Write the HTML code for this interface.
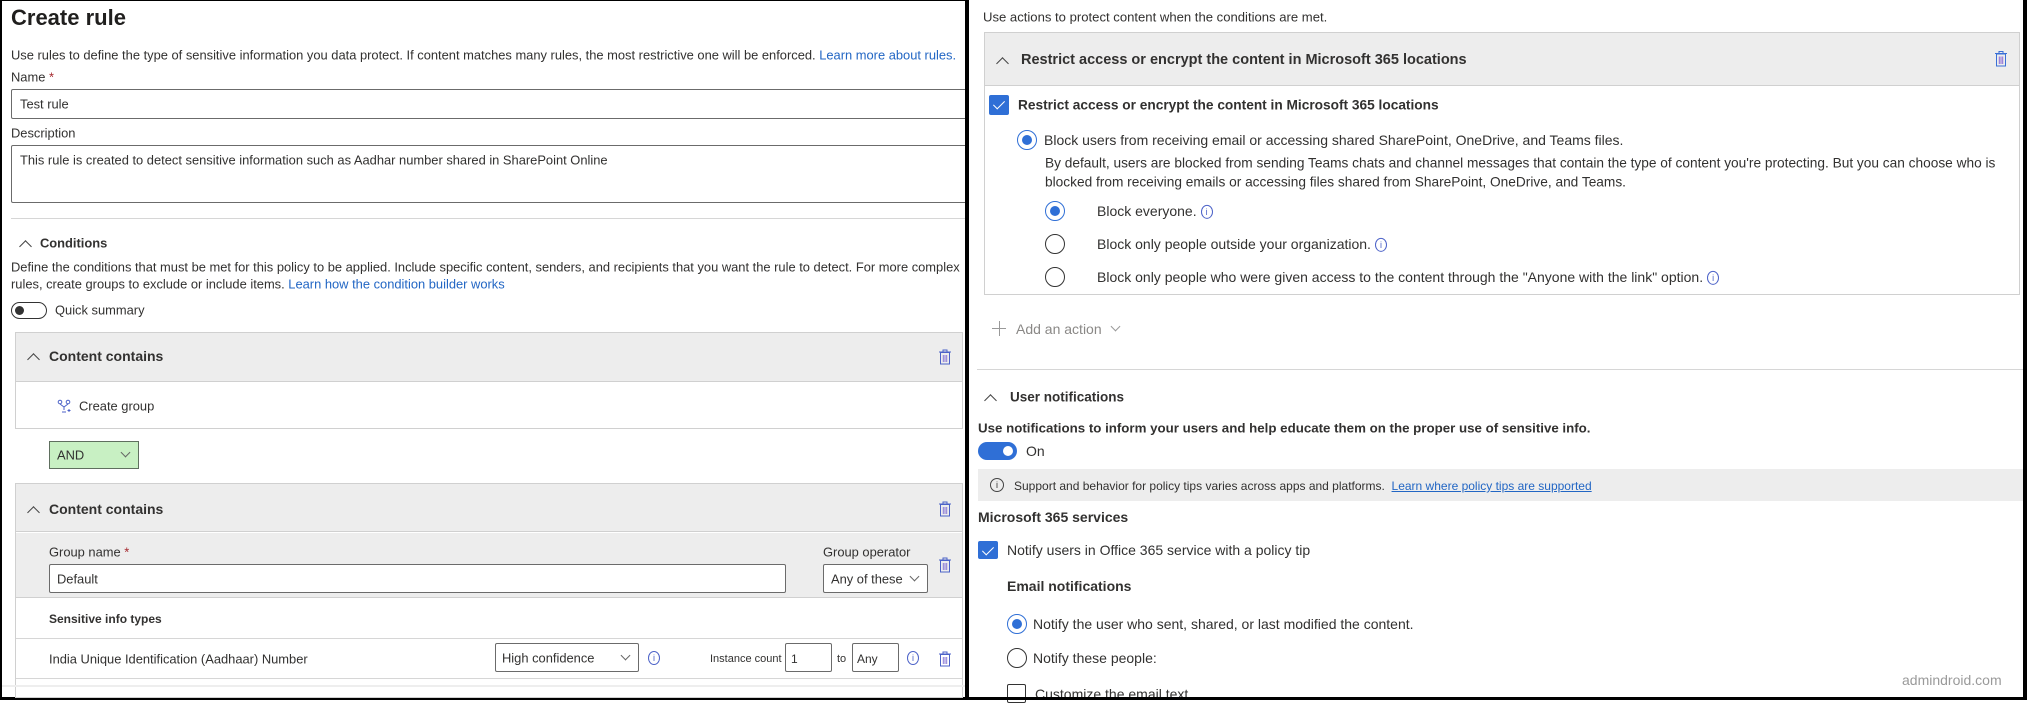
<!DOCTYPE html>
<html><head><meta charset="utf-8"><style>
*{box-sizing:border-box;margin:0;padding:0}
body{width:2027px;height:700px;overflow:hidden;background:#fff;font-family:"Liberation Sans",sans-serif;font-size:13px;color:#323130;position:relative}
.a{position:absolute;white-space:nowrap}
.c{transform:translateY(-50%)}
.link{color:#2266c4}
.b{font-weight:bold}
.box{position:absolute;border:1px solid #d0d0d0}
.gray{background:#ededed}
.inp{position:absolute;border:1px solid #6b6b6b;background:#fff;border-radius:2px}
.chev{position:absolute;width:9px;height:9px;border-left:1.2px solid #444;border-top:1.2px solid #444;transform:rotate(45deg)}
.dd{position:absolute;width:7px;height:7px;border-right:1px solid #666;border-bottom:1px solid #666;transform:rotate(45deg)}
.radio{position:absolute;width:20px;height:20px;border:1.5px solid #333;border-radius:50%;background:#fff}
.radio.on{border-color:#2f6fd6}
.radio.on::after{content:"";position:absolute;left:3.5px;top:3.5px;width:10px;height:10px;border-radius:50%;background:#2f6fd6}
.cb{position:absolute;background:#2f6fd6;border-radius:2px}
.cb::after{content:"";position:absolute;left:7px;top:3px;width:5px;height:10px;border-right:1.5px solid #fff;border-bottom:1.5px solid #fff;transform:rotate(45deg)}
.info{position:absolute;width:12px;height:14px;border:1px solid #4c62c8;border-radius:50%;font-size:9px;color:#4c62c8;text-align:center;line-height:12px}
.ii{display:inline-block;width:12px;height:14px;border:1px solid #4c62c8;border-radius:50%;font-size:9px;color:#4c62c8;text-align:center;line-height:12px;vertical-align:middle;margin-left:4px}
.L{font-size:12.9px}
.R{font-size:14px}
</style></head><body>
<!-- borders -->
<div class="a" style="left:0;top:0;width:2027px;height:1px;background:#000"></div>
<div class="a" style="left:0;top:0;width:2px;height:700px;background:#000"></div>
<div class="a" style="left:0;top:697px;width:2027px;height:3px;background:#000"></div>
<div class="a" style="left:2023px;top:0;width:4px;height:700px;background:#000"></div>

<!-- LEFT -->
<div class="a c b" style="left:11px;top:18px;font-size:22px;color:#201f1e">Create rule</div>
<div class="a c L" style="left:11px;top:55px">Use rules to define the type of sensitive information you data protect. If content matches many rules, the most restrictive one will be enforced. <span class="link">Learn more about rules.</span></div>
<div class="a c L" style="left:11px;top:77px">Name <span style="color:#a4262c">*</span></div>
<div class="inp" style="left:11px;top:89px;width:958px;height:30px"></div>
<div class="a c L" style="left:20px;top:104px">Test rule</div>
<div class="a c L" style="left:11px;top:133px">Description</div>
<div class="inp" style="left:11px;top:145px;width:958px;height:58px"></div>
<div class="a c L" style="left:20px;top:160px">This rule is created to detect sensitive information such as Aadhar number shared in SharePoint Online</div>
<div class="a" style="left:11px;top:218px;width:955px;height:1px;background:#d6d6d6"></div>
<div class="chev" style="left:21px;top:242px"></div>
<div class="a c b L" style="left:40px;top:243px">Conditions</div>
<div class="a c L" style="left:11px;top:267px">Define the conditions that must be met for this policy to be applied. Include specific content, senders, and recipients that you want the rule to detect. For more complex</div>
<div class="a c L" style="left:11px;top:284px">rules, create groups to exclude or include items. <span class="link">Learn how the condition builder works</span></div>
<div class="a" style="left:11px;top:302px;width:36px;height:17px;border:1.5px solid #333;border-radius:9px"></div>
<div class="a" style="left:15px;top:306px;width:9px;height:9px;border-radius:50%;background:#333"></div>
<div class="a c L" style="left:55px;top:310px">Quick summary</div>

<div class="box" style="left:15px;top:332px;width:948px;height:97px"></div>
<div class="a gray" style="left:16px;top:333px;width:946px;height:49px;border-bottom:1px solid #d0d0d0"></div>
<div class="chev" style="left:29px;top:355px"></div>
<div class="a c b" style="left:49px;top:356px;font-size:14px">Content contains</div>
<svg class="a" style="left:938px;top:349px" width="14" height="16" viewBox="0 0 14 16"><path d="M1 3h12M5 3V1h4v2M2.5 3.5h9v11.5h-9z" fill="none" stroke="#4c62c8"/><path d="M5.3 6v7M7 6v7M8.7 6v7" stroke="#8a7ad6"/></svg>
<svg class="a" style="left:57px;top:399px" width="15" height="14" viewBox="0 0 15 14"><g fill="none" stroke="#4c62c8" stroke-width="1"><circle cx="3" cy="3" r="1.8"/><circle cx="11" cy="3" r="1.8"/><path d="M3 5l4 3 4-3M7 8v3M5 13h4M12 10v3M10.5 11.5h3"/></g></svg>
<div class="a c L" style="left:79px;top:406px">Create group</div>
<div class="a" style="left:49px;top:441px;width:90px;height:28px;background:#c8f0c3;border:1px solid #5f6f5f"></div>
<div class="a c L" style="left:57px;top:455px">AND</div>
<div class="dd" style="left:122px;top:449px"></div>

<div class="box" style="left:15px;top:483px;width:948px;height:215px"></div>
<div class="a gray" style="left:16px;top:484px;width:946px;height:48px;border-bottom:1px solid #d0d0d0"></div>
<div class="chev" style="left:29px;top:508px"></div>
<div class="a c b" style="left:49px;top:509px;font-size:14px">Content contains</div>
<svg class="a" style="left:938px;top:501px" width="14" height="16" viewBox="0 0 14 16"><path d="M1 3h12M5 3V1h4v2M2.5 3.5h9v11.5h-9z" fill="none" stroke="#4c62c8"/><path d="M5.3 6v7M7 6v7M8.7 6v7" stroke="#8a7ad6"/></svg>
<div class="a gray" style="left:16px;top:533px;width:946px;height:65px;border-bottom:1px solid #d0d0d0"></div>
<div class="a c L" style="left:49px;top:552px">Group name <span style="color:#a4262c">*</span></div>
<div class="inp" style="left:49px;top:564px;width:737px;height:29px"></div>
<div class="a c L" style="left:57px;top:579px">Default</div>
<div class="a c L" style="left:823px;top:552px">Group operator</div>
<div class="inp" style="left:823px;top:564px;width:105px;height:29px"></div>
<div class="a c L" style="left:831px;top:579px">Any of these</div>
<div class="dd" style="left:911px;top:573px"></div>
<svg class="a" style="left:938px;top:557px" width="14" height="16" viewBox="0 0 14 16"><path d="M1 3h12M5 3V1h4v2M2.5 3.5h9v11.5h-9z" fill="none" stroke="#4c62c8"/><path d="M5.3 6v7M7 6v7M8.7 6v7" stroke="#8a7ad6"/></svg>
<div class="a c b" style="left:49px;top:619px;font-size:12px">Sensitive info types</div>
<div class="a" style="left:16px;top:638px;width:946px;height:1px;background:#d6d6d6"></div>
<div class="a c L" style="left:49px;top:659px">India Unique Identification (Aadhaar) Number</div>
<div class="inp" style="left:495px;top:643px;width:144px;height:29px"></div>
<div class="a c L" style="left:502px;top:658px">High confidence</div>
<div class="dd" style="left:622px;top:652px"></div>
<div class="info" style="left:648px;top:651px">i</div>
<div class="a c" style="left:710px;top:659px;font-size:11px">Instance count</div>
<div class="inp" style="left:785px;top:643px;width:47px;height:29px"></div>
<div class="a c" style="left:791px;top:659px;font-size:12px">1</div>
<div class="a c" style="left:837px;top:659px;font-size:11px">to</div>
<div class="inp" style="left:852px;top:643px;width:47px;height:29px"></div>
<div class="a c" style="left:857px;top:659px;font-size:12px">Any</div>
<div class="info" style="left:907px;top:651px">i</div>
<svg class="a" style="left:938px;top:651px" width="14" height="16" viewBox="0 0 14 16"><path d="M1 3h12M5 3V1h4v2M2.5 3.5h9v11.5h-9z" fill="none" stroke="#4c62c8"/><path d="M5.3 6v7M7 6v7M8.7 6v7" stroke="#8a7ad6"/></svg>
<div class="a" style="left:16px;top:678px;width:946px;height:1px;background:#d6d6d6"></div>
<div class="a" style="left:2px;top:685px;width:963px;height:2px;background:#eeeeee"></div>

<!-- divider (covers overflow) -->
<div class="a" style="left:965px;top:0;width:1062px;height:697px;background:#fff"></div>
<div class="a" style="left:965px;top:0;width:4px;height:700px;background:#000"></div>
<div class="a" style="left:2023px;top:0;width:4px;height:700px;background:#000"></div>

<!-- RIGHT -->
<div class="a c" style="left:983px;top:17px;font-size:13.1px">Use actions to protect content when the conditions are met.</div>
<div class="box" style="left:984px;top:32px;width:1036px;height:263px"></div>
<div class="a gray" style="left:985px;top:33px;width:1034px;height:53px;border-bottom:1px solid #d0d0d0"></div>
<div class="chev" style="left:998px;top:59px"></div>
<div class="a c b" style="left:1021px;top:60px;font-size:14.5px">Restrict access or encrypt the content in Microsoft 365 locations</div>
<svg class="a" style="left:1994px;top:50px" width="14" height="17" viewBox="0 0 14 17"><path d="M1 3.5h12M5 3.5V1.5h4v2M2.5 4h9v12h-9z" fill="none" stroke="#3a6fd6"/><path d="M5.3 6.5v7.5M7 6.5v7.5M8.7 6.5v7.5" stroke="#8a6ad6"/></svg>
<div class="cb" style="left:989px;top:95px;width:20px;height:20px"></div>
<div class="a c b" style="left:1018px;top:105px;font-size:13.7px">Restrict access or encrypt the content in Microsoft 365 locations</div>
<div class="radio on" style="left:1017px;top:130px"></div>
<div class="a c R" style="left:1044px;top:140px">Block users from receiving email or accessing shared SharePoint, OneDrive, and Teams files.</div>
<div class="a c" style="left:1045px;top:163px;font-size:13.7px">By default, users are blocked from sending Teams chats and channel messages that contain the type of content you're protecting. But you can choose who is</div>
<div class="a c" style="left:1045px;top:182px;font-size:13.7px">blocked from receiving emails or accessing files shared from SharePoint, OneDrive, and Teams.</div>
<div class="radio on" style="left:1045px;top:201px"></div>
<div class="a c R" style="left:1097px;top:211px">Block everyone.<span class="ii">i</span></div>
<div class="radio" style="left:1045px;top:234px"></div>
<div class="a c R" style="left:1097px;top:244px">Block only people outside your organization.<span class="ii">i</span></div>
<div class="radio" style="left:1045px;top:267px"></div>
<div class="a c R" style="left:1097px;top:277px">Block only people who were given access to the content through the "Anyone with the link" option.<span class="ii">i</span></div>
<div class="a" style="left:992px;top:328px;width:14px;height:1px;background:#999"></div>
<div class="a" style="left:999px;top:321px;width:1px;height:15px;background:#999"></div>
<div class="a c R" style="left:1016px;top:329px;color:#8a8886">Add an action</div>
<div class="dd" style="left:1112px;top:323px;border-color:#999"></div>
<div class="a" style="left:977px;top:369px;width:1046px;height:1px;background:#d6d6d6"></div>
<div class="chev" style="left:986px;top:396px"></div>
<div class="a c b" style="left:1010px;top:397px;font-size:13.5px">User notifications</div>
<div class="a c" style="left:978px;top:428px;font-size:13.3px;font-weight:600">Use notifications to inform your users and help educate them on the proper use of sensitive info.</div>
<div class="a" style="left:978px;top:442px;width:39px;height:18px;border-radius:9px;background:#2f6fd6"></div>
<div class="a" style="left:1003px;top:446px;width:10px;height:10px;border-radius:50%;background:#fff"></div>
<div class="a c R" style="left:1026px;top:451px">On</div>
<div class="a" style="left:978px;top:469px;width:1045px;height:32px;background:#ededed"></div>
<div class="a" style="left:990px;top:478px;width:14px;height:14px;border:1px solid #444;border-radius:50%;font-size:9px;text-align:center;line-height:12px">i</div>
<div class="a c" style="left:1014px;top:486px;font-size:12px">Support and behavior for policy tips varies across apps and platforms. &nbsp;<span class="link" style="text-decoration:underline">Learn where policy tips are supported</span></div>
<div class="a c" style="left:978px;top:517px;font-size:14px;font-weight:600">Microsoft 365 services</div>
<div class="cb" style="left:978px;top:541px;width:20px;height:18px"></div>
<div class="a c R" style="left:1007px;top:550px">Notify users in Office 365 service with a policy tip</div>
<div class="a c" style="left:1007px;top:586px;font-size:14px;font-weight:600">Email notifications</div>
<div class="radio on" style="left:1007px;top:614px"></div>
<div class="a c R" style="left:1033px;top:624px">Notify the user who sent, shared, or last modified the content.</div>
<div class="radio" style="left:1007px;top:648px"></div>
<div class="a c R" style="left:1033px;top:658px">Notify these people:</div>
<div class="a" style="left:1007px;top:684px;width:19px;height:19px;border:1.5px solid #333;border-radius:2px"></div>
<div class="a c R" style="left:1035px;top:694px">Customize the email text</div>
<div class="a c" style="left:1902px;top:680px;font-size:14px;color:#9a9a9a">admindroid.com</div>
<div class="a" style="left:965px;top:697px;width:1062px;height:3px;background:#000"></div>
</body></html>
